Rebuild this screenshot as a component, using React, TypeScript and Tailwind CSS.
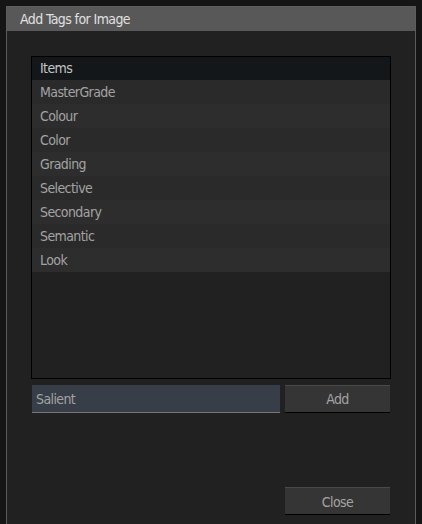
const items = ["MasterGrade", "Colour", "Color", "Grading", "Selective", "Secondary", "Semantic", "Look"]

export default function App() {
  return (
    <div
      className="h-[524px] w-[422px] overflow-hidden bg-[#151515] pl-[6px] pt-[6px] text-[14px] tracking-[-0.6px] text-[#a3a3a3]"
      style={{ fontFamily: '"DejaVu Sans Condensed", "DejaVu Sans", sans-serif' }}
    >
      <div className="h-[540px] w-[410px] border border-[#5c5c5c] bg-[#212121]">
        <div className="flex h-[24px] items-center bg-[#585858] pl-[13px] text-[#e0e0e0]">Add Tags for Image</div>

        <div className="px-[24px] pt-[25px]">
          <div className="h-[323px] border border-black bg-[#212121]">
            <div className="flex h-[23px] items-center bg-[#13171a] pl-[8px] text-[#c4c4c4]">Items</div>
            {items.map((item, i) => (
              <div
                key={item}
                className={`flex h-[24px] items-center pl-[8px] ${i % 2 === 0 ? "bg-[#2a2a2a]" : "bg-[#2d2d2d]"}`}
              >
                {item}
              </div>
            ))}
          </div>

          <div className="mt-[6px] flex gap-[5px] pl-[1px]">
            <div className="flex h-[28px] w-[248px] items-center border-b border-[#777] bg-[#373e48] pl-[4px] pt-[2px] text-[#a3a3a3]">
              Salient
            </div>
            <button className="h-[28px] w-[105px] border-t border-t-[#4a4a4a] border-b border-b-black bg-[#353535] pt-[1px] text-[#a3a3a3]">
              Add
            </button>
          </div>

          <div className="mt-[74px] flex justify-end pr-[1px]">
            <button className="h-[28px] w-[105px] border-t border-t-[#4a4a4a] border-b border-b-black bg-[#353535] pt-[2px] text-[#a3a3a3]">
              Close
            </button>
          </div>
        </div>
      </div>
    </div>
  )
}
